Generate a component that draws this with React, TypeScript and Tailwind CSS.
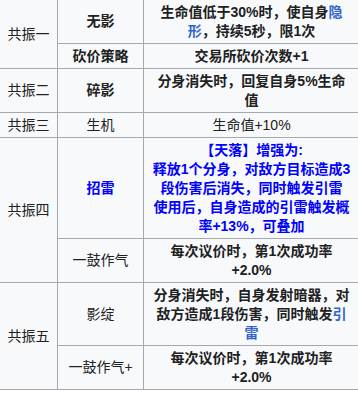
const td = 'border border-[#a2a9b1] px-[7px] py-[2.5px] text-center align-middle';
const link = 'text-[#3366cc]';
const blue = 'text-[#0000ff]';

export default function App() {
  return (
    <div className="w-[358px] h-[395px] overflow-hidden bg-white">
      <table className="table-fixed border-collapse -mt-px -ml-px w-[360px] bg-[#f8f9fa] text-[#202122] text-[14px] leading-[19px] font-['Liberation_Sans','Noto_Sans_CJK_SC',sans-serif]">
        <colgroup>
          <col className="w-[58px]" />
          <col className="w-[86px]" />
          <col className="w-[216px]" />
        </colgroup>
        <tbody>
          {/* 共振一 */}
          <tr>
            <td rowSpan={2} className={td}>共振一</td>
            <td className={`${td} font-bold`}>无影</td>
            <td className={`${td} font-bold`}>
              生命值低于30%时，使自身<span className={link}>隐形</span>，持续5秒，限1次
            </td>
          </tr>
          <tr>
            <td className={`${td} font-bold`}>砍价策略</td>
            <td className={`${td} font-bold`}>交易所砍价次数+1</td>
          </tr>

          {/* 共振二 */}
          <tr>
            <td className={td}>共振二</td>
            <td className={`${td} font-bold`}>碎影</td>
            <td className={`${td} font-bold`}>分身消失时，回复自身5%生命值</td>
          </tr>

          {/* 共振三 */}
          <tr>
            <td className={td}>共振三</td>
            <td className={td}>生机</td>
            <td className={td}>生命值+10%</td>
          </tr>

          {/* 共振四 */}
          <tr>
            <td rowSpan={2} className={td}>共振四</td>
            <td className={`${td} font-bold ${blue}`}>招雷</td>
            <td className={`${td} font-bold ${blue}`}>
              【天落】增强为:
              <br />
              释放1个分身，对敌方目标造成3段伤害后消失，同时触发引雷
              <br />
              使用后，自身造成的引雷触发概率+13%，可叠加
            </td>
          </tr>
          <tr>
            <td className={td}>一鼓作气</td>
            <td className={`${td} font-bold`}>每次议价时，第1次成功率+2.0%</td>
          </tr>

          {/* 共振五 */}
          <tr>
            <td rowSpan={2} className={td}>共振五</td>
            <td className={td}>影绽</td>
            <td className={`${td} font-bold`}>
              分身消失时，自身发射暗器，对敌方造成1段伤害，同时触发<span className={link}>引雷</span>
            </td>
          </tr>
          <tr>
            <td className={td}>一鼓作气+</td>
            <td className={`${td} font-bold`}>每次议价时，第1次成功率+2.0%</td>
          </tr>
        </tbody>
      </table>
    </div>
  );
}
